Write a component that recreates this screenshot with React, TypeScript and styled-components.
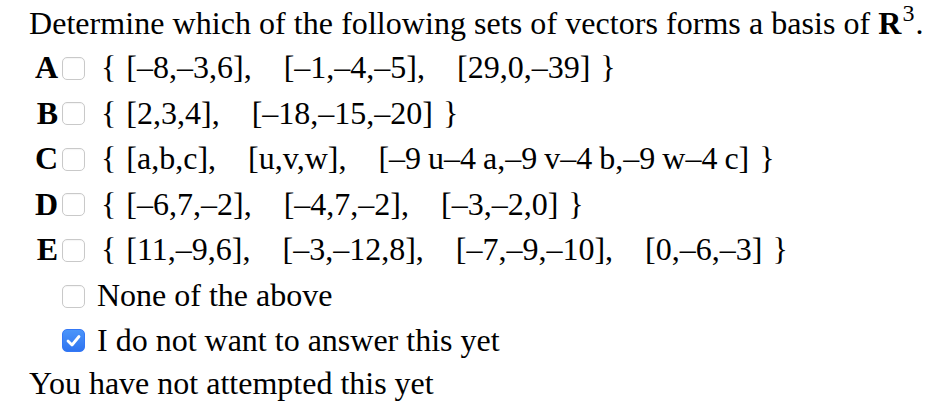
import React from "react";
import styled, { createGlobalStyle } from "styled-components";

const Global = createGlobalStyle`
  html, body { margin: 0; padding: 0; background: #fff; }
  body { font-family: "Liberation Serif", "Times New Roman", serif; color: #000; }
`;

const Page = styled.div`
  padding: 0 0 0 29px;
  font-size: 32px;
`;

const Title = styled.div`
  padding-top: 2px;
  line-height: 43px;
  height: 43px;
  white-space: nowrap;
  letter-spacing: 0.05px;
`;

const Bold = styled.b`
  font-weight: bold;
`;

const Sup = styled.sup`
  font-size: 0.75em;
  vertical-align: 0.55em;
  line-height: 0;
  margin-left: 1px;
  margin-right: 1px;
`;

const Grid = styled.div`
  display: grid;
  grid-template-columns: 29px 23px auto;
  grid-auto-rows: 45.5px;
  column-gap: 4px;
  align-items: center;
`;

const Letter = styled.div`
  font-weight: bold;
  text-align: right;
  line-height: 45.5px;
  height: 45.5px;
`;

const BoxCell = styled.div<{ $shift?: number }>`
  display: flex;
  align-items: center;
  height: 45.5px;
  padding-top: ${(p) => 1 + (p.$shift ?? 0)}px;
  box-sizing: border-box;
`;

const Box = styled.span<{ $checked?: boolean }>`
  display: inline-flex;
  align-items: center;
  justify-content: center;
  width: 23px;
  height: 23px;
  box-sizing: border-box;
  border-radius: 5px;
  border: 1px solid ${(p) => (p.$checked ? "#3478f6" : "#c9c9c9")};
  background: ${(p) => (p.$checked ? "linear-gradient(#4b95fa, #2f74f0)" : "#fff")};
  box-shadow: ${(p) => (p.$checked ? "none" : "inset 0 1px 1px rgba(0,0,0,0.04)")};
`;

const Text = styled.div`
  line-height: 45.5px;
  height: 45.5px;
  white-space: nowrap;
  padding-left: 8px;
`;

const SetLine = styled(Text)`
  padding-left: 12px;
  word-spacing: 2px;
`;

const Vec = styled.span`
  word-spacing: -1px;
  & + &::before {
    content: "";
    display: inline-block;
    width: 32px;
  }
`;

const Footer = styled.div`
  line-height: 38px;
  height: 38px;
`;

const M = "\u2013";

const rows: { l: string; v: string[] }[] = [
  { l: "A", v: [`[${M}8,${M}3,6]`, `[${M}1,${M}4,${M}5]`, `[29,0,${M}39]`] },
  { l: "B", v: [`[2,3,4]`, `[${M}18,${M}15,${M}20]`] },
  { l: "C", v: [`[a,b,c]`, `[u,v,w]`, `[${M}9 u${M}4 a,${M}9 v${M}4 b,${M}9 w${M}4 c]`] },
  { l: "D", v: [`[${M}6,7,${M}2]`, `[${M}4,7,${M}2]`, `[${M}3,${M}2,0]`] },
  { l: "E", v: [`[11,${M}9,6]`, `[${M}3,${M}12,8]`, `[${M}7,${M}9,${M}10]`, `[0,${M}6,${M}3]`] },
];

const Check = () => (
  <svg width="15" height="13" viewBox="0 0 15 13">
    <path d="M2 7 L6 11 L13 2.5" fill="none" stroke="#fff" strokeWidth="2.8" strokeLinecap="round" strokeLinejoin="round" />
  </svg>
);

export default function App() {
  return (
    <Page>
      <Global />
      <Title>
        Determine which of the following sets of vectors forms a basis of <Bold>R</Bold>
        <Sup>3</Sup>.
      </Title>
      <Grid>
        {rows.map((r) => (
          <React.Fragment key={r.l}>
            <Letter>{r.l}</Letter>
            <BoxCell>
              <Box />
            </BoxCell>
            <SetLine>
              {"{ "}
              {r.v.map((x, i) => (
                <Vec key={i}>
                  {x}
                  {i < r.v.length - 1 ? "," : ""}
                </Vec>
              ))}
              {" }"}
            </SetLine>
          </React.Fragment>
        ))}
        <Letter />
        <BoxCell $shift={1}>
          <Box />
        </BoxCell>
        <Text>None of the above</Text>
        <Letter />
        <BoxCell $shift={-1}>
          <Box $checked>
            <Check />
          </Box>
        </BoxCell>
        <Text>I do not want to answer this yet</Text>
      </Grid>
      <Footer>You have not attempted this yet</Footer>
    </Page>
  );
}
